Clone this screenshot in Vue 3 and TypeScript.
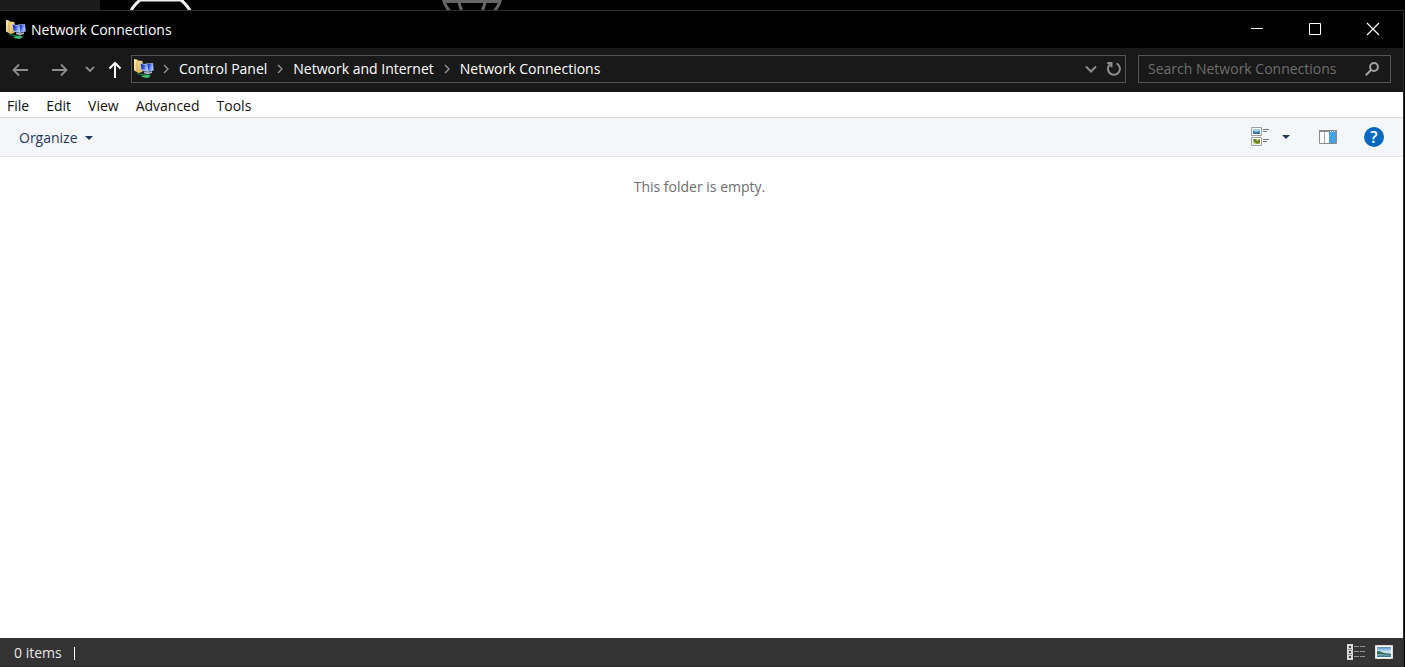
<script setup lang="ts">
import { ref } from 'vue'

const crumbs: string[] = ['Control Panel', 'Network and Internet', 'Network Connections']
const menus: string[] = ['File', 'Edit', 'View', 'Advanced', 'Tools']
const query = ref('')
</script>

<template>
  <div class="desktop">
    <svg width="0" height="0" class="defs" aria-hidden="true">
      <defs>
        <linearGradient id="folder" x1="0" y1="0" x2="1" y2="1">
          <stop offset="0" stop-color="#fff3b4" />
          <stop offset="1" stop-color="#d9ae50" />
        </linearGradient>
        <linearGradient id="screen" x1="0" y1="0" x2="1" y2="0.3">
          <stop offset="0" stop-color="#0c1590" />
          <stop offset="0.45" stop-color="#2f50d8" />
          <stop offset="1" stop-color="#a9c8fa" />
        </linearGradient>
        <linearGradient id="photo" x1="0" y1="0" x2="0" y2="1">
          <stop offset="0" stop-color="#4a8fd0" />
          <stop offset="0.5" stop-color="#d6ebf6" />
          <stop offset="1" stop-color="#2d6a94" />
        </linearGradient>
        <symbol id="network" viewBox="0 0 20 20">
          <path d="M0 0l3 0.500 1 1 4.500 0.500v11l-4 1L0 11.500z" fill="url(#folder)" />
          <path d="M3 1.500v11.500" stroke="#c99d48" stroke-width="0.800" />
          <path d="M11.500 4.500l7.500-0.500 0.800 7.500-6 1.500z" fill="#8fa6dc" />
          <path d="M12.500 5.300l5.700-0.500 0.700 6-5 1.200z" fill="url(#screen)" />
          <path d="M6 4l7.500 1.500 1 7.500-7.500-1.500z" fill="#a9bae6" />
          <path d="M6.800 5l6 1.300 0.800 5.500-6-1.200z" fill="url(#screen)" />
          <path d="M10 12.500l5 0.700 3-1v1.800l-4 1.200-4-1z" fill="#a8b2c4" />
          <path d="M2.500 15l1-0.800 13.500 2-1 1.500z" fill="#1f8a4c" />
          <path d="M8 16.800l6.500-1.300 1.500 2.500-3 1-5.500-1z" fill="#3cb873" />
        </symbol>
      </defs>
    </svg>

    <div class="backdrop" aria-hidden="true">
      <svg class="outline" width="62" height="10" viewBox="0 0 62 10" fill="none" stroke="#f0f0f0" stroke-width="3">
        <path d="M1 11q2-5 9-11M51 0q7 6 9 11M8 0h46" />
      </svg>
      <svg class="globe" width="60" height="11" viewBox="0 0 60 11" fill="none" stroke="#666" stroke-width="3">
        <path d="M2 1.500h56M1.500 0q1 5 6 11M58.500 0q-1 5-6 11M17 0q0 6 3 11M43 0q0 6-3 11" />
      </svg>
    </div>

    <main class="window">
      <header class="titlebar">
        <svg class="net-icon" width="20" height="20"><use href="#network" /></svg>
        <h1>Network Connections</h1>
        <div class="controls">
          <button type="button" aria-label="Minimize">
            <svg width="14" height="14" stroke="#fff" fill="none"><path d="M1 6.500h12" /></svg>
          </button>
          <button type="button" aria-label="Maximize">
            <svg width="14" height="14" stroke="#fff" fill="none"><path d="M1.500 1.500h11v11h-11z" /></svg>
          </button>
          <button type="button" aria-label="Close">
            <svg width="14" height="14" stroke="#fff" stroke-width="1.200"><path d="M1 1l12 12M13 1L1 13" /></svg>
          </button>
        </div>
      </header>

      <nav class="navbar" aria-label="Location">
        <button type="button" class="arrow" aria-label="Back">
          <svg width="16" height="16" fill="none" stroke="#8c8c8c" stroke-width="1.800"><path d="M16 8H1.500M7 2.500L1.500 8 7 13.500" /></svg>
        </button>
        <button type="button" class="arrow" aria-label="Forward">
          <svg width="16" height="16" fill="none" stroke="#8c8c8c" stroke-width="1.800"><path d="M0 8h14.500M9 2.500L14.500 8 9 13.500" /></svg>
        </button>
        <button type="button" class="recent" aria-label="Recent locations">
          <svg width="10" height="8" fill="none" stroke="#8c8c8c" stroke-width="1.800"><path d="M1 2l4 4 4-4" /></svg>
        </button>
        <button type="button" class="up" aria-label="Up">
          <svg width="14" height="18" fill="none" stroke="#fff" stroke-width="2"><path d="M7 17V2M1.500 7.500L7 2l5.500 5.500" /></svg>
        </button>
        <div class="address">
          <svg class="net-icon" width="20" height="20"><use href="#network" /></svg>
          <ol>
            <li v-for="crumb in crumbs" :key="crumb">
              <svg width="6" height="10" fill="none" stroke="#8c8c8c" stroke-width="1.500"><path d="M1 1l4 4-4 4" /></svg>
              <a href="#">{{ crumb }}</a>
            </li>
          </ol>
          <button type="button" class="history" aria-label="Previous locations">
            <svg width="12" height="8" fill="none" stroke="#8c8c8c" stroke-width="2"><path d="M1 1.500l5 5 5-5" /></svg>
          </button>
          <button type="button" class="refresh" aria-label="Refresh">
            <svg width="16" height="16" fill="none" stroke="#8c8c8c" stroke-width="2">
              <path d="M10.500 2.400a6 6 0 1 1-5.500 0.200M1.200 2h4.300v4.300" />
            </svg>
          </button>
        </div>
        <label class="search">
          <input v-model="query" type="text" placeholder="Search Network Connections" aria-label="Search Network Connections" />
          <svg width="14" height="14" fill="none" stroke="#a0a0a0" stroke-width="2"><circle cx="9" cy="5" r="3.900" /><path d="M6.300 7.700L0.800 13.200" /></svg>
        </label>
      </nav>

      <div class="menubar">
        <button v-for="menu in menus" :key="menu" type="button">{{ menu }}</button>
      </div>

      <div class="toolbar">
        <button type="button" class="organize">
          Organize
          <svg width="8" height="4" fill="#1e395b"><path d="M0 0h8L4 4z" /></svg>
        </button>
        <button type="button" class="views" aria-label="Change your view">
          <svg width="20" height="20">
            <path d="M1.500 0.500h10v8h-10zM1.500 10.500h10v8h-10z" fill="#fff" stroke="#a0a0a0" />
            <path d="M3 2h7v5H3z" fill="#9dcbea" />
            <path d="M3 4l3 1 4-1v3H3z" fill="#3975a8" />
            <path d="M3 12h7v5H3z" fill="#d9d48a" />
            <path d="M3 12h3l1 2 3-2v4l-3 1-3-2z" fill="#668a31" />
            <path d="M13 2.500h6M13 4.500h4M13 12.500h6M13 14.500h4" stroke="#777" />
          </svg>
        </button>
        <button type="button" class="more" aria-label="More view options">
          <svg width="8" height="4" fill="#1e395b"><path d="M0 0h8L4 4z" /></svg>
        </button>
        <button type="button" class="preview" aria-label="Show the preview pane">
          <svg width="18" height="14">
            <path d="M0.500 0.500h17v13H0.500z" fill="#fff" stroke="#8b8b8b" />
            <path d="M0 0h18v2H0z" fill="#8b8b8b" />
            <path d="M5.500 2v11" stroke="#a5a5a5" />
            <path d="M10 1h7v12h-7z" fill="#45a3e5" />
            <path d="M11 1.500h5" stroke="#d5ecfb" stroke-dasharray="1 1" />
          </svg>
        </button>
        <button type="button" class="help" aria-label="Help"><span>?</span></button>
      </div>

      <section class="content"><p>This folder is empty.</p></section>

      <footer class="statusbar">
        <span class="count">0 items</span>
        <button type="button" class="details" aria-label="Details view">
          <svg width="18" height="16">
            <path d="M0 0h6v16H0z" fill="#d8d8d8" />
            <path d="M2 2h2v2H2zM2 7h2v2H2zM2 12h2v2H2z" fill="#444" />
            <path d="M1 5.500h4M1 10.500h4" stroke="#888" />
            <path d="M7 2.500h5M13 2.500h5M7 7.500h5M13 7.500h5M7 12.500h5M13 12.500h5" stroke="#929292" />
          </svg>
        </button>
        <button type="button" class="large" aria-label="Large icons view">
          <svg width="18" height="14">
            <path d="M0.500 0.500h17v13H0.500z" fill="#fff" stroke="#ddd" />
            <path d="M2 2h14v10H2z" fill="url(#photo)" />
            <path d="M2 6q4 0 7 2l7 1v1L2 9z" fill="#337052" />
          </svg>
        </button>
      </footer>
    </main>
  </div>
</template>

<style>
body {
  margin: 0;
  background: #000;
}
</style>

<style scoped>
.desktop {
  display: flex;
  flex-direction: column;
  min-height: 100vh;
  box-sizing: border-box;
  padding-right: 1px;
  background: #000;
  font-family: "Open Sans", "Noto Sans", sans-serif;
  font-size: 14px;
  line-height: 20px;
}
.defs {
  position: absolute;
}
svg {
  display: block;
  flex: none;
}
button {
  display: flex;
  align-items: center;
  justify-content: center;
  margin: 0;
  padding: 0;
  border: 0;
  background: none;
  color: inherit;
  font: inherit;
}
.backdrop {
  display: flex;
  height: 10px;
  overflow: hidden;
  background: linear-gradient(#1b1b1b, #1b1b1b) 0 0 / 100px 100% no-repeat;
}
.outline {
  margin-left: 130px;
}
.globe {
  margin-left: 250px;
}
.window {
  display: flex;
  flex: 1;
  flex-direction: column;
  border: solid #2c2c2c;
  border-width: 1px 1px 1px 0;
}
.titlebar {
  display: flex;
  align-items: center;
  height: 37px;
  padding-left: 6px;
  background: #000;
  color: #fff;
}
.titlebar h1 {
  flex: 1;
  margin: 0 0 0 5px;
  font-size: 14px;
  font-weight: 400;
}
.controls {
  display: flex;
  height: 36px;
  align-self: flex-start;
  padding-right: 1px;
}
.controls button {
  width: 58px;
}
.navbar {
  display: flex;
  align-items: center;
  height: 44px;
  box-sizing: border-box;
  padding: 0 12px 2px 0;
  background: #191919;
}
.arrow {
  width: 40px;
  height: 28px;
  padding-top: 2px;
}
.recent {
  width: 19px;
  height: 28px;
}
.up {
  width: 32px;
  height: 28px;
  padding-top: 2px;
}
.address {
  display: flex;
  flex: 1;
  align-items: center;
  height: 28px;
  box-sizing: border-box;
  padding-left: 2px;
  border: 1px solid #535353;
}
.address ol {
  display: flex;
  flex: 1;
  margin: 0;
  padding: 0;
  list-style: none;
}
.address li {
  display: flex;
  align-items: center;
  gap: 10px;
  padding-left: 10px;
}
.address li:first-child {
  padding-left: 9px;
}
.address a {
  color: #fff;
  text-decoration: none;
}
.history {
  width: 24px;
  height: 26px;
}
.refresh {
  width: 22px;
  height: 26px;
}
.search {
  display: flex;
  align-items: center;
  width: 253px;
  height: 28px;
  box-sizing: border-box;
  margin-left: 12px;
  padding: 0 11px 0 9px;
  border: 1px solid #535353;
}
.search input {
  flex: 1;
  min-width: 0;
  padding: 0;
  border: 0;
  outline: 0;
  background: none;
  color: #fff;
  font: inherit;
}
.search input::placeholder {
  color: #6d6d6d;
  opacity: 1;
}
.menubar {
  display: flex;
  gap: 17px;
  height: 25px;
  padding: 0 7px;
  border-bottom: 1px solid #d9d9d9;
  background: #fff;
  color: #111;
}
.menubar button {
  padding-top: 2px;
}
.toolbar {
  display: flex;
  align-items: center;
  height: 38px;
  padding: 0 19px;
  border-bottom: 1px solid #e3e6ea;
  background: #f4f6f9;
  color: #1e395b;
}
.organize {
  gap: 7px;
  margin-right: auto;
  padding-top: 2px;
}
.more {
  width: 32px;
  height: 20px;
}
.preview {
  margin-left: 17px;
}
.help {
  width: 20px;
  height: 20px;
  margin-left: 27px;
  border-radius: 50%;
  background: #0768bd;
  color: #fff;
  font-size: 16px;
  font-weight: 600;
}
.content {
  flex: 1;
  background: #fff;
  color: #6d6d6d;
  text-align: center;
}
.content p {
  margin: 20px 4px 0 0;
}
.statusbar {
  display: flex;
  align-items: center;
  height: 28px;
  padding: 0 10px 0 14px;
  background: #333;
  color: #e6e6e6;
}
.count {
  display: flex;
  align-items: center;
  gap: 12px;
  margin-right: auto;
  padding-top: 2px;
}
.count::after {
  width: 1px;
  height: 13px;
  background: #fff;
  content: "";
}
.large {
  margin-left: 10px;
}
</style>
